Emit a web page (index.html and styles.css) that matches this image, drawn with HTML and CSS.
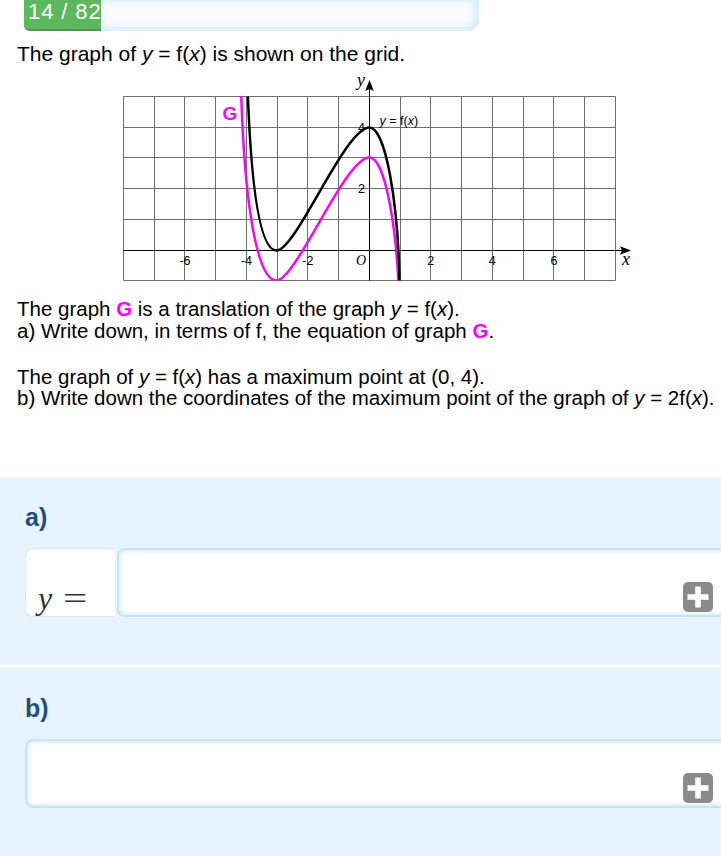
FILE: index.html
```html
<!DOCTYPE html>
<html>
<head>
<meta charset="utf-8">
<link rel="stylesheet" href="styles.css">
</head>
<body>
<div class="topbar">
  <div class="badge">14 / 82</div>
  <div class="progress"></div>
</div>
<p class="intro">The graph of <i>y</i> = f(<i>x</i>) is shown on the grid.</p>
<svg class="graph" width="530" height="218" viewBox="110 66 530 218">
  <defs>
    <clipPath id="gridclip"><rect x="123.5" y="96.5" width="492" height="184"/></clipPath>
  </defs>
  <path class="grid" d="M123.5 96.5V280.5M154.5 96.5V280.5M184.5 96.5V280.5M215.5 96.5V280.5M246.5 96.5V280.5M277.5 96.5V280.5M307.5 96.5V280.5M338.5 96.5V280.5M400.5 96.5V280.5M430.5 96.5V280.5M461.5 96.5V280.5M492.5 96.5V280.5M523.5 96.5V280.5M553.5 96.5V280.5M584.5 96.5V280.5M615.5 96.5V280.5M123.5 96.5H615.5M123.5 127.5H615.5M123.5 157.5H615.5M123.5 188.5H615.5M123.5 219.5H615.5M123.5 280.5H615.5"/>
  <path class="axis" d="M369.5 280.5V88M123.5 250.5H622"/>
  <polygon class="arrow" points="369.5,80 373.8,91 369.5,89 365.2,91"/>
  <polygon class="arrow" points="631,250.5 620,246.2 622,250.5 620,254.8"/>
  <g clip-path="url(#gridclip)">
    <path class="curve-g" d="M240.8,80 C244,210 258,280.5 276.5,280.5 C296,280.5 345,157.5 369.5,157.5 C385,157.5 399,230 399.8,326"/>
    <path class="curve-f" d="M247.5,85 C251,190 260,250.5 276.5,250.5 C296,250.5 345,127.5 369.5,127.5 C385,127.5 399,200 399.8,296"/>
  </g>
  <g class="tick">
    <text x="185" y="264.5" text-anchor="middle">-6</text>
    <text x="246.5" y="264.5" text-anchor="middle">-4</text>
    <text x="307.8" y="264.5" text-anchor="middle">-2</text>
    <text x="430.8" y="264.5" text-anchor="middle">2</text>
    <text x="492.3" y="264.5" text-anchor="middle">4</text>
    <text x="554" y="264.5" text-anchor="middle">6</text>
    <text x="365" y="131.5" text-anchor="end">4</text>
    <text x="365" y="193" text-anchor="end">2</text>
    <text x="379.5" y="124.5"><tspan font-style="italic">y</tspan> = f(<tspan font-style="italic">x</tspan>)</text>
  </g>
  <text class="origin" x="366" y="264.5" text-anchor="end">O</text>
  <text class="axlabel" x="357" y="86">y</text>
  <text class="axlabel" x="622" y="265">x</text>
  <text class="glabel" x="222.5" y="120">G</text>
</svg>
<div class="question">
  <p>The graph <b class="g">G</b> is a translation of the graph <i>y</i> = f(<i>x</i>).<br>a) Write down, in terms of f, the equation of graph <b class="g">G</b>.</p>
  <p>The graph of <i>y</i> = f(<i>x</i>) has a maximum point at (0, 4).<br>b) Write down the coordinates of the maximum point of the graph of <i>y</i> = 2f(<i>x</i>).</p>
</div>
<section class="part">
  <div class="part-label">a)</div>
  <div class="answer-row">
    <div class="prefix"><span class="var">y</span><span class="eq">=</span></div>
    <div class="input">
      <svg class="plus" width="30" height="30" viewBox="0 0 30 30"><rect width="30" height="30" rx="5" fill="#8a8a8a"/><rect x="12.2" y="4.5" width="5.6" height="21" fill="#fff"/><rect x="4.5" y="12.2" width="21" height="5.6" fill="#fff"/></svg>
    </div>
  </div>
</section>
<section class="part part-b">
  <div class="part-label">b)</div>
  <div class="answer-row">
    <div class="input">
      <svg class="plus" width="30" height="30" viewBox="0 0 30 30"><rect width="30" height="30" rx="5" fill="#8a8a8a"/><rect x="12.2" y="4.5" width="5.6" height="21" fill="#fff"/><rect x="4.5" y="12.2" width="21" height="5.6" fill="#fff"/></svg>
    </div>
  </div>
</section>
</body>
</html>
```
FILE: styles.css
```css
html, body {
  margin: 0;
  padding: 0;
  background: #fff;
}
body {
  font-family: "Liberation Sans", Arial, sans-serif;
  color: #000;
  width: 721px;
  overflow-x: hidden;
}
.topbar {
  display: flex;
  margin-left: 24px;
  width: 455px;
  height: 31px;
}
.badge {
  width: 73px;
  height: 29px;
  background: #5cb85c;
  border-bottom: 2px solid #4a9a4a;
  border-bottom-left-radius: 6px;
  color: #fff;
  font-size: 22px;
  letter-spacing: 0.9px;
  line-height: 24px;
  padding-left: 4px;
  white-space: nowrap;
}
.progress {
  flex: 1;
  background: #f8fbff;
  border-bottom-right-radius: 11px;
  box-shadow: inset 0 -4px 7px #dcedfc, inset -5px 0 7px #dcedfc, inset 0 2px 4px #eef6fe;
}
.intro {
  margin: 12px 0 0 17px;
  font-size: 21px;
  line-height: 22px;
}
.graph {
  display: block;
  margin: 1px 0 0 110px;
}
.grid {
  fill: none;
  stroke: #6e6e6e;
  stroke-width: 1;
}
.axis {
  fill: none;
  stroke: #000;
  stroke-width: 1;
}
.arrow {
  fill: #000;
}
.curve-f {
  fill: none;
  stroke: #000;
  stroke-width: 2.5;
}
.curve-g {
  fill: none;
  stroke: #ff00ff;
  stroke-width: 2.5;
}
.tick text {
  font-family: "Liberation Sans", Arial, sans-serif;
  font-size: 12.5px;
  fill: #000;
}
.origin {
  font-family: "Liberation Serif", "Times New Roman", serif;
  font-style: italic;
  font-size: 14px;
  fill: #000;
}
.axlabel {
  font-family: "Liberation Serif", "Times New Roman", serif;
  font-style: italic;
  font-size: 18px;
  fill: #000;
}
.glabel {
  font-family: "Liberation Sans", Arial, sans-serif;
  font-weight: bold;
  font-size: 19px;
  fill: #ff00ff;
}
.question {
  margin: 14px 0 0 17px;
  font-size: 20.5px;
  line-height: 21.5px;
}
.question p {
  margin: 0 0 24.5px 0;
  white-space: nowrap;
}
.g {
  color: #ff00ff;
}
.part {
  margin-top: 68px;
  background: #e7f3fd;
  height: 188px;
  box-sizing: border-box;
  padding: 24px 0 0 25px;
  overflow: hidden;
}
.part-b {
  margin-top: 3px;
}
.part-label {
  font-weight: bold;
  font-size: 25px;
  line-height: 32px;
  color: #1d4e7e;
}
.answer-row {
  display: flex;
  margin-top: 15px;
  margin-right: -30px;
  height: 69px;
}
.prefix {
  width: 90px;
  box-sizing: border-box;
  background: #fff;
  border: 1px solid #d3eafc;
  border-right: none;
  border-radius: 8px 0 0 8px;
  display: flex;
  align-items: flex-end;
  padding: 0 0 3px 12px;
  font-family: "Liberation Serif", "Times New Roman", serif;
  font-size: 32px;
  line-height: 30px;
  color: #333;
}
.var {
  font-style: italic;
}
.eq {
  display: inline-block;
  margin-left: 11px;
  transform: scaleX(1.35);
  transform-origin: left center;
}
.prefix + .input {
  margin-left: 2px;
}
.input {
  flex: 1;
  box-sizing: border-box;
  background: #fff;
  border: 2px solid #c6e3fb;
  border-radius: 8px;
  box-shadow: inset 0 0 5px 1px #cfe8fc;
  display: flex;
  align-items: flex-end;
  justify-content: flex-end;
  padding: 0 36px 3px 0;
}
.plus {
  display: block;
}
```
